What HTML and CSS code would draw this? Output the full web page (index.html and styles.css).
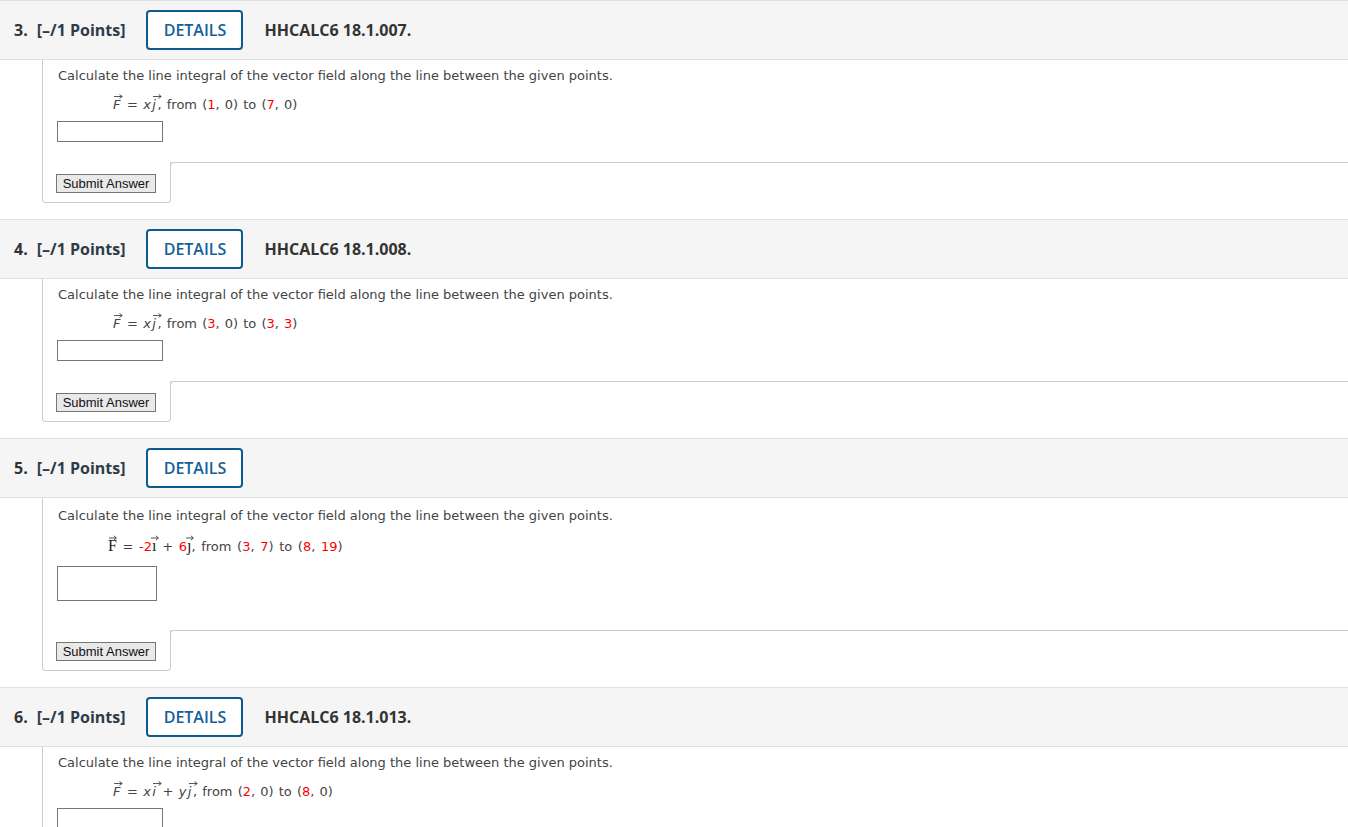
FILE: index.html
```html
<!DOCTYPE html>
<html>
<head>
<meta charset="utf-8">
<link rel="stylesheet" href="styles.css">
</head>
<body>

<section class="question">
  <header class="qhead">
    <span class="qnum">3.</span>
    <span class="qpts">[–/1 Points]</span>
    <button class="details">DETAILS</button>
    <span class="qcode">HHCALC6 18.1.007.</span>
  </header>
  <div class="qwrap">
    <div class="qcontent">
      <p class="prompt">Calculate the line integral of the vector field along the line between the given points.</p>
      <p class="formula"><span class="vec"><i>F</i><svg class="arr" viewBox="0 0 9 5"><path d="M0 2.5H8M5.5 0.5L8.3 2.5L5.5 4.5" fill="none" stroke="#444" stroke-width="0.9"/></svg></span> = <i>x</i><span class="vec"><i>j</i><svg class="arr" viewBox="0 0 9 5"><path d="M0 2.5H8M5.5 0.5L8.3 2.5L5.5 4.5" fill="none" stroke="#444" stroke-width="0.9"/></svg></span>, from (<span class="red">1</span>, 0) to (<span class="red">7</span>, 0)</p>
      <input class="answer" type="text">
    </div>
    <div class="submit-row">
      <div class="tab"><button class="submit">Submit Answer</button></div>
      <div class="tabline"></div>
    </div>
  </div>
</section>

<section class="question">
  <header class="qhead">
    <span class="qnum">4.</span>
    <span class="qpts">[–/1 Points]</span>
    <button class="details">DETAILS</button>
    <span class="qcode">HHCALC6 18.1.008.</span>
  </header>
  <div class="qwrap">
    <div class="qcontent">
      <p class="prompt">Calculate the line integral of the vector field along the line between the given points.</p>
      <p class="formula"><span class="vec"><i>F</i><svg class="arr" viewBox="0 0 9 5"><path d="M0 2.5H8M5.5 0.5L8.3 2.5L5.5 4.5" fill="none" stroke="#444" stroke-width="0.9"/></svg></span> = <i>x</i><span class="vec"><i>j</i><svg class="arr" viewBox="0 0 9 5"><path d="M0 2.5H8M5.5 0.5L8.3 2.5L5.5 4.5" fill="none" stroke="#444" stroke-width="0.9"/></svg></span>, from (<span class="red">3</span>, 0) to (<span class="red">3</span>, <span class="red">3</span>)</p>
      <input class="answer" type="text">
    </div>
    <div class="submit-row">
      <div class="tab"><button class="submit">Submit Answer</button></div>
      <div class="tabline"></div>
    </div>
  </div>
</section>

<section class="question">
  <header class="qhead">
    <span class="qnum">5.</span>
    <span class="qpts">[–/1 Points]</span>
    <button class="details">DETAILS</button>
  </header>
  <div class="qwrap">
    <div class="qcontent qcontent-big">
      <p class="prompt">Calculate the line integral of the vector field along the line between the given points.</p>
      <p class="formula formula-serif"><span class="vec"><span class="serif">F</span><svg class="arr arr-s" viewBox="0 0 9 6"><path d="M0 3H8M5.5 0.5L8.3 3L5.5 5.5" fill="none" stroke="#222" stroke-width="0.9"/></svg></span> = <span class="red">-2</span><span class="vec"><span class="serif">ı</span><svg class="arr arr-s arr-n" viewBox="0 0 9 6"><path d="M0 3H8M5.5 0.5L8.3 3L5.5 5.5" fill="none" stroke="#222" stroke-width="0.9"/></svg></span> + <span class="red">6</span><span class="vec"><span class="serif">ȷ</span><svg class="arr arr-s arr-n" viewBox="0 0 9 6"><path d="M0 3H8M5.5 0.5L8.3 3L5.5 5.5" fill="none" stroke="#222" stroke-width="0.9"/></svg></span>, from (<span class="red">3</span>, <span class="red">7</span>) to (<span class="red">8</span>, <span class="red">19</span>)</p>
      <input class="answer answer-big" type="text">
    </div>
    <div class="submit-row">
      <div class="tab"><button class="submit">Submit Answer</button></div>
      <div class="tabline"></div>
    </div>
  </div>
</section>

<section class="question">
  <header class="qhead">
    <span class="qnum">6.</span>
    <span class="qpts">[–/1 Points]</span>
    <button class="details">DETAILS</button>
    <span class="qcode">HHCALC6 18.1.013.</span>
  </header>
  <div class="qwrap">
    <div class="qcontent">
      <p class="prompt">Calculate the line integral of the vector field along the line between the given points.</p>
      <p class="formula"><span class="vec"><i>F</i><svg class="arr" viewBox="0 0 9 5"><path d="M0 2.5H8M5.5 0.5L8.3 2.5L5.5 4.5" fill="none" stroke="#444" stroke-width="0.9"/></svg></span> = <i>x</i><span class="vec"><i>i</i><svg class="arr" viewBox="0 0 9 5"><path d="M0 2.5H8M5.5 0.5L8.3 2.5L5.5 4.5" fill="none" stroke="#444" stroke-width="0.9"/></svg></span> + <i>y</i><span class="vec"><i>j</i><svg class="arr" viewBox="0 0 9 5"><path d="M0 2.5H8M5.5 0.5L8.3 2.5L5.5 4.5" fill="none" stroke="#444" stroke-width="0.9"/></svg></span>, from (<span class="red">2</span>, 0) to (<span class="red">8</span>, 0)</p>
      <input class="answer" type="text">
    </div>
  </div>
</section>

</body>
</html>
```

FILE: styles.css
```css
html, body {
  margin: 0;
  padding: 0;
  background: #fff;
}

body {
  font-family: "DejaVu Sans", Verdana, sans-serif;
  color: #444;
  overflow: hidden;
}

.question {
  display: block;
}

.qhead {
  display: flex;
  align-items: center;
  height: 58px;
  background: #f5f5f5;
  border-top: 1px solid #e0e0e0;
  border-bottom: 1px solid #e0e0e0;
  padding-left: 14px;
  font-family: "Open Sans", sans-serif;
  font-weight: 700;
  font-size: 16px;
  color: #333;
}

.qnum {
  margin-right: 9px;
}

.qpts {
  color: #2f3b48;
  margin-right: 21px;
}

.details {
  width: 97px;
  height: 40px;
  box-sizing: border-box;
  border: 2px solid #0d5b8e;
  border-radius: 4px;
  background: #fff;
  color: #15609a;
  font-family: "Open Sans", sans-serif;
  font-weight: 600;
  font-size: 16px;
  padding: 0;
  margin-right: 21px;
}

.qcode {
  color: #333;
}

.qwrap {
  margin-left: 42px;
  padding-bottom: 16px;
}

.qcontent {
  border-left: 1px solid #ccc;
  padding: 7px 0 20px 15px;
}

.qcontent-big {
  padding-top: 9px;
  padding-bottom: 29px;
}

.prompt {
  margin: 0;
  font-size: 13px;
  line-height: 18px;
  color: #444;
}

.formula {
  margin: 11px 0 0 55px;
  font-size: 13px;
  line-height: 18px;
  color: #444;
  word-spacing: 1px;
}

.formula i {
  font-style: italic;
  margin-right: 1.5px;
}

.formula-serif {
  margin: 12px 0 0 50px;
  line-height: 20px;
  word-spacing: 1.5px;
}

.serif {
  font-family: "Liberation Serif", "DejaVu Serif", serif;
  font-size: 16px;
  color: #222;
}

.vec {
  position: relative;
  display: inline-block;
  line-height: 1;
}

.arr {
  position: absolute;
  left: 1px;
  top: -4px;
  width: 9px;
  height: 5px;
}

.arr-s {
  left: 1px;
  top: -3px;
  width: 8px;
  height: 6px;
}

.arr-n {
  left: -1px;
}

.red {
  color: #f00;
}

.answer {
  display: block;
  margin: 7px 0 0 -1px;
  width: 106px;
  height: 21px;
  box-sizing: border-box;
  border: 1px solid #767676;
  padding: 0;
  background: #fff;
}

.answer-big {
  width: 100px;
  height: 35px;
  margin-top: 9px;
}

.submit-row {
  display: flex;
  align-items: flex-start;
}

.tab {
  border-left: 1px solid #ccc;
  border-right: 1px solid #ccc;
  border-bottom: 1px solid #ccc;
  border-radius: 0 0 4px 4px;
  padding: 12px 0 9px 13px;
  box-sizing: content-box;
  width: 114px;
}

.submit {
  display: block;
  width: 100px;
  height: 19px;
  box-sizing: border-box;
  border: 1px solid #767676;
  background: #e9e9e9;
  font-family: "Liberation Sans", Arial, sans-serif;
  font-size: 13px;
  color: #111;
  padding: 0;
  line-height: 17px;
}

.tabline {
  flex: 1;
  height: 6px;
  margin-left: -1px;
  border-top: 1px solid #ccc;
  border-left: 1px solid #ccc;
  border-top-left-radius: 4px;
}
```
